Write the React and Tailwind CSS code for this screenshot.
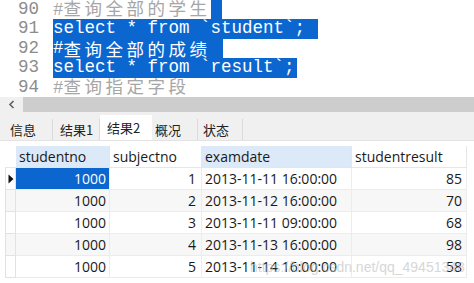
import React from 'react';

const mono = { fontFamily: '"Liberation Mono", "Noto Sans CJK SC", monospace' };

const rows = [
    { no: 1000, sub: 1, date: '2013-11-11 16:00:00', res: 85 },
    { no: 1000, sub: 2, date: '2013-11-12 16:00:00', res: 70 },
    { no: 1000, sub: 3, date: '2013-11-11 09:00:00', res: 68 },
    { no: 1000, sub: 4, date: '2013-11-13 16:00:00', res: 98 },
    { no: 1000, sub: 5, date: '2013-11-14 16:00:00', res: 58 },
];

const Cjk = ({ children }) => (
    <span className="tracking-[3.5px]" style={{ fontFamily: '"Noto Sans CJK SC", sans-serif' }}>{children}</span>
);

const Line = ({ n, children }) => (
    <div className="flex h-[19.4px] items-center leading-none">
        <span className="w-[53px] shrink-0 pl-[18px] text-[#8c8c8c]">{n}</span>
        {children}
    </div>
);

const App = () => {
    return (
        <div className="w-[474px] h-[283px] overflow-hidden bg-white flex flex-col">
            {/* Editor */}
            <div className="h-[97px] shrink-0 overflow-hidden text-[17.5px] whitespace-pre" style={mono}>
                <Line n="90">
                    <span className="text-[#a6a6a6]">#<Cjk>查询全部的学生</Cjk></span>
                    <span className="w-[11px] h-full bg-[#0b67cf]" />
                </Line>
                <Line n="91">
                    <span className="w-[265px] h-full flex items-center bg-[#0b67cf] text-white">select * from `student`;</span>
                </Line>
                <Line n="92">
                    <span className="w-[170px] h-full flex items-center bg-[#0b67cf] text-white">#<Cjk>查询全部的成绩</Cjk></span>
                </Line>
                <Line n="93">
                    <span className="w-[244px] h-full flex items-center bg-[#0b67cf] text-white">select * from `result`;</span>
                </Line>
                <Line n="94">
                    <span className="text-[#a6a6a6]">#<Cjk>查询指定字段</Cjk></span>
                </Line>
            </div>

            {/* Horizontal scrollbar */}
            <div className="h-[15px] shrink-0 flex bg-[#f0f0f0]">
                <div className="w-[23px] flex items-center justify-center">
                    <svg width="7" height="9" viewBox="0 0 7 9">
                        <path d="M5.5 1 L2 4.5 L5.5 8" fill="none" stroke="#606060" strokeWidth="1.6" />
                    </svg>
                </div>
                <div className="flex-1 bg-[#cdcdcd]" />
            </div>

            {/* Tabs */}
            <div
                className="h-[29px] shrink-0 flex items-end bg-[#f0f0f0] border-b border-[#e3e3e3] text-[13px] text-[#222]"
                style={{ fontFamily: '"Noto Sans CJK SC", sans-serif' }}
            >
                <div className="w-[53px] h-[21px] flex items-center pl-[10px] border-r border-[#dadada]">信息</div>
                <div className="w-[47px] h-[21px] flex items-center pl-[7px] border-r border-[#dadada]">结果1</div>
                <div className="w-[52px] h-[25px] flex items-center pl-[7px] bg-white">结果2</div>
                <div className="w-[46px] h-[21px] flex items-center pl-[3px] border-r border-[#dadada]">概况</div>
                <div className="w-[45px] h-[21px] flex items-center pl-[5px] border-r border-[#dadada]">状态</div>
            </div>

            {/* Result grid */}
            <div className="flex-1 relative pt-[5px] pl-[5px] text-[14px] text-[#1a1a1a]" style={{ fontFamily: '"Open Sans", "Noto Sans", sans-serif' }}>
                <div className="grid grid-cols-[11px_94px_92px_150px_115px] auto-rows-[22px]">
                    <div className="border-b border-[#e6e6e6]" />
                    <div className="bg-[#dbe9f8] border-r border-b border-[#e0e6ee] pl-[3px] flex items-center">studentno</div>
                    <div className="border-r border-b border-[#e6e6e6] pl-[3px] flex items-center">subjectno</div>
                    <div className="bg-[#dbe9f8] border-r border-b border-[#e0e6ee] pl-[3px] flex items-center">examdate</div>
                    <div className="border-r border-b border-[#e6e6e6] pl-[3px] flex items-center">studentresult</div>

                    {rows.map((r, i) => {
                        const bg = i % 2 === 0 ? 'bg-white' : 'bg-[#f7f7f7]';
                        return (
                            <React.Fragment key={i}>
                                <div className={`border-l border-r border-b border-[#e2e2e2] flex items-center justify-center ${bg}`}>
                                    {i === 0 && (
                                        <svg width="6" height="10" viewBox="0 0 6 10">
                                            <path d="M0.5 0.5 L5.5 5 L0.5 9.5 Z" fill="#111" />
                                        </svg>
                                    )}
                                </div>
                                <div className={`border-r border-b border-[#ececec] flex items-center justify-end pr-[3px] ${i === 0 ? 'bg-[#0b67cf] text-white' : bg}`}>{r.no}</div>
                                <div className={`border-r border-b border-[#ececec] flex items-center justify-end pr-[5px] ${bg}`}>{r.sub}</div>
                                <div className={`border-r border-b border-[#ececec] flex items-center pl-[3px] ${bg}`}>{r.date}</div>
                                <div className={`border-r border-b border-[#ececec] flex items-center justify-end pr-[4px] ${bg}`}>{r.res}</div>
                            </React.Fragment>
                        );
                    })}
                </div>
                <div className="absolute left-[250px] top-[116px] text-[14px] text-[#bdbdbd] opacity-60 whitespace-nowrap" style={{ fontFamily: '"Liberation Sans", sans-serif' }}>
                    https://blog.csdn.net/qq_49451348
                </div>
            </div>
        </div>
    );
};

export default App;
